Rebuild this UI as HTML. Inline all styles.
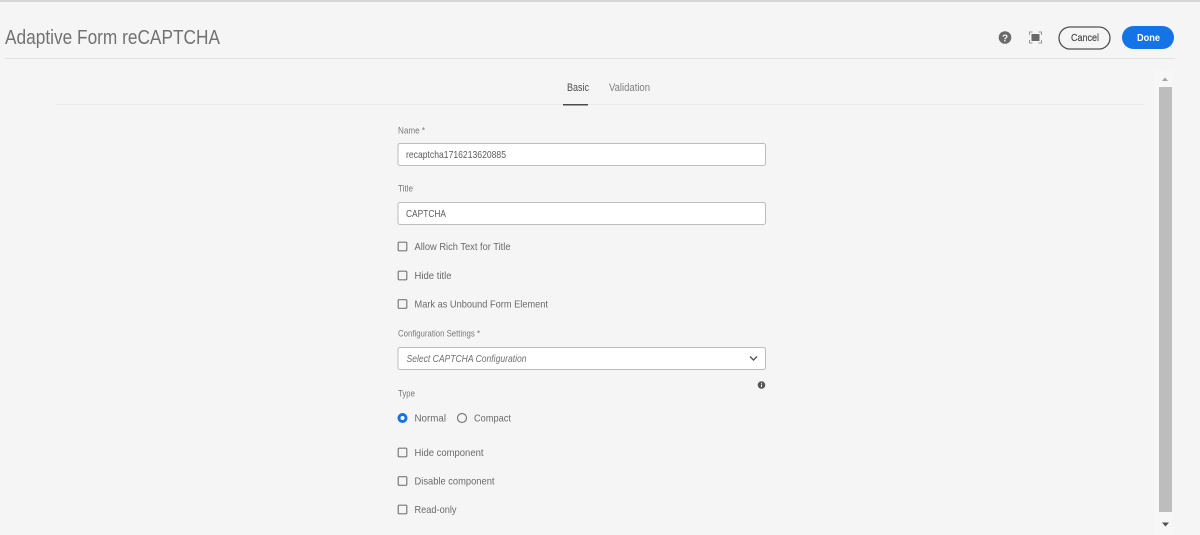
<!DOCTYPE html>
<html lang="en">
<head>
<meta charset="utf-8">
<title>Adaptive Form reCAPTCHA</title>
<style>
html,body{margin:0;padding:0;background:#f5f5f5;width:1200px;height:535px;overflow:hidden}
svg{display:block}
text{font-family:"Liberation Sans",sans-serif;fill:#5c5c5c;font-size:10.5px}
.l{font-size:9px;fill:#7a7a7a}
.c{font-size:10.5px;fill:#6a6a6a}
.b{fill:#fff;stroke:#bcbcbc;stroke-width:1}
.k{fill:none;stroke:#7a7a7a;stroke-width:1.2}
</style>
</head>
<body>
<svg width="1200" height="535" viewBox="0 0 1200 535" xmlns="http://www.w3.org/2000/svg">
<rect width="1200" height="535" fill="#f5f5f5"/>
<rect x="0" y="0" width="1200" height="2" fill="#d6d6d6"/>
<rect x="5" y="58" width="1170" height="1" fill="#e0e0e0"/>
<rect x="55" y="104" width="1090" height="1" fill="#ebebeb"/>

<text x="5" y="44" textLength="215" lengthAdjust="spacingAndGlyphs" style="font-size:20.500px;fill:#727272">Adaptive Form reCAPTCHA</text>

<!-- help icon -->
<circle cx="1005" cy="37.500" r="6.300" fill="#6a6a6a"/>
<text x="1005" y="41.500" text-anchor="middle" style="font-size:10px;font-weight:bold;fill:#f5f5f5">?</text>
<!-- fullscreen icon -->
<rect x="1031.500" y="34" width="8" height="7" fill="#6a6a6a"/>
<path d="M1029.500 35v-3h3M1038.500 32h3v3M1041.500 40v3h-3M1032.500 43h-3v-3" fill="none" stroke="#999" stroke-width="1"/>

<!-- buttons -->
<rect x="1059" y="27" width="51" height="22" rx="11" fill="#f5f5f5" stroke="#505050" stroke-width="1.300"/>
<text x="1071" y="41" textLength="28" lengthAdjust="spacingAndGlyphs" style="font-size:10.500px;fill:#4a4a4a;stroke:#4a4a4a;stroke-width:.2">Cancel</text>
<rect x="1122" y="26" width="52" height="23" rx="11.500" fill="#1473e6"/>
<text x="1137" y="41" textLength="23" lengthAdjust="spacingAndGlyphs" style="font-size:10.500px;font-weight:bold;fill:#fff">Done</text>

<!-- tabs -->
<text x="567" y="91" textLength="22" lengthAdjust="spacingAndGlyphs" style="font-size:11px;fill:#505050">Basic</text>
<text x="609" y="91" textLength="41" lengthAdjust="spacingAndGlyphs" style="font-size:11px;fill:#808080">Validation</text>
<rect x="563" y="104" width="25" height="1.500" fill="#4b4b4b"/>

<!-- name -->
<text class="l" x="398" y="133.500" textLength="27" lengthAdjust="spacingAndGlyphs">Name *</text>
<rect class="b" x="398" y="143.500" width="367.500" height="22" rx="2"/>
<text x="406" y="158" textLength="100" lengthAdjust="spacingAndGlyphs">recaptcha1716213620885</text>

<!-- title -->
<text class="l" x="398" y="191.500" textLength="15" lengthAdjust="spacingAndGlyphs">Title</text>
<rect class="b" x="398" y="202.500" width="367.500" height="22" rx="2"/>
<text x="406" y="217" textLength="40" lengthAdjust="spacingAndGlyphs">CAPTCHA</text>

<!-- checkboxes -->
<rect class="k" x="398.200" y="242.200" width="8.600" height="8.600" rx="1"/>
<text class="c" x="414.500" y="250" textLength="96" lengthAdjust="spacingAndGlyphs">Allow Rich Text for Title</text>
<rect class="k" x="398.200" y="271.200" width="8.600" height="8.600" rx="1"/>
<text class="c" x="414.500" y="279" textLength="37" lengthAdjust="spacingAndGlyphs">Hide title</text>
<rect class="k" x="398.200" y="299.700" width="8.600" height="8.600" rx="1"/>
<text class="c" x="414.500" y="307.500" textLength="133.500" lengthAdjust="spacingAndGlyphs">Mark as Unbound Form Element</text>

<!-- config -->
<text class="l" x="398" y="336.500" textLength="82" lengthAdjust="spacingAndGlyphs">Configuration Settings *</text>
<rect class="b" x="398" y="347.500" width="367.500" height="22" rx="2"/>
<text x="406.500" y="362" textLength="120" lengthAdjust="spacingAndGlyphs" style="font-style:italic;fill:#707070">Select CAPTCHA Configuration</text>
<path d="M750 356.500l3.500 3.500 3.500-3.500" fill="none" stroke="#555" stroke-width="1.400"/>
<circle cx="761.500" cy="385" r="3.800" fill="#555"/>
<rect x="761" y="384.500" width="1" height="2.500" fill="#f5f5f5"/>
<rect x="761" y="382.800" width="1" height="1" fill="#f5f5f5"/>

<!-- type -->
<text class="l" x="398" y="396.500" textLength="17" lengthAdjust="spacingAndGlyphs">Type</text>
<circle cx="402.500" cy="418" r="5" fill="#1473e6"/>
<circle cx="402.500" cy="418" r="2" fill="#fff"/>
<text class="c" x="414.500" y="421.500" textLength="31.500" lengthAdjust="spacingAndGlyphs">Normal</text>
<circle cx="462" cy="418" r="4.500" fill="none" stroke="#7a7a7a" stroke-width="1.200"/>
<text class="c" x="474" y="421.500" textLength="37" lengthAdjust="spacingAndGlyphs">Compact</text>

<rect class="k" x="398.200" y="448.200" width="8.600" height="8.600" rx="1"/>
<text class="c" x="414.500" y="456" textLength="69" lengthAdjust="spacingAndGlyphs">Hide component</text>
<rect class="k" x="398.200" y="476.700" width="8.600" height="8.600" rx="1"/>
<text class="c" x="414.500" y="484.500" textLength="80" lengthAdjust="spacingAndGlyphs">Disable component</text>
<rect class="k" x="398.200" y="505.200" width="8.600" height="8.600" rx="1"/>
<text class="c" x="414.500" y="513" textLength="42" lengthAdjust="spacingAndGlyphs">Read-only</text>

<!-- scrollbar -->
<rect x="1155" y="70" width="17" height="465" fill="#f7f7f7"/>
<rect x="1159" y="87" width="13" height="425" fill="#bdbdbd"/>
<path d="M1162 81l3-3.500 3 3.500z" fill="#a3a3a3"/>
<path d="M1162 522.500h7l-3.500 4z" fill="#505050"/>
</svg>
</body>
</html>
